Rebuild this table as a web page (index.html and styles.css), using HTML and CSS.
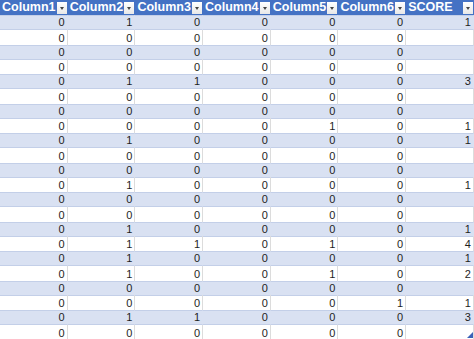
FILE: index.html
```html
<!DOCTYPE html>
<html>
<head>
<meta charset="utf-8">
<link rel="stylesheet" href="styles.css">
</head>
<body>
<div class="sheet">
  <div class="row head">
    <div class="hc"><span>Column1</span><i class="dd"></i></div>
    <div class="hc"><span>Column2</span><i class="dd"></i></div>
    <div class="hc"><span>Column3</span><i class="dd"></i></div>
    <div class="hc"><span>Column4</span><i class="dd"></i></div>
    <div class="hc"><span>Column5</span><i class="dd"></i></div>
    <div class="hc"><span>Column6</span><i class="dd"></i></div>
    <div class="hc"><span>SCORE</span><i class="dd"></i></div>
  </div>
  <div class="row band"><div class="c">0</div><div class="c">1</div><div class="c">0</div><div class="c">0</div><div class="c">0</div><div class="c">0</div><div class="c">1</div></div>
  <div class="row"><div class="c">0</div><div class="c">0</div><div class="c">0</div><div class="c">0</div><div class="c">0</div><div class="c">0</div><div class="c"></div></div>
  <div class="row band"><div class="c">0</div><div class="c">0</div><div class="c">0</div><div class="c">0</div><div class="c">0</div><div class="c">0</div><div class="c"></div></div>
  <div class="row"><div class="c">0</div><div class="c">0</div><div class="c">0</div><div class="c">0</div><div class="c">0</div><div class="c">0</div><div class="c"></div></div>
  <div class="row band"><div class="c">0</div><div class="c">1</div><div class="c">1</div><div class="c">0</div><div class="c">0</div><div class="c">0</div><div class="c">3</div></div>
  <div class="row"><div class="c">0</div><div class="c">0</div><div class="c">0</div><div class="c">0</div><div class="c">0</div><div class="c">0</div><div class="c"></div></div>
  <div class="row band"><div class="c">0</div><div class="c">0</div><div class="c">0</div><div class="c">0</div><div class="c">0</div><div class="c">0</div><div class="c"></div></div>
  <div class="row"><div class="c">0</div><div class="c">0</div><div class="c">0</div><div class="c">0</div><div class="c">1</div><div class="c">0</div><div class="c">1</div></div>
  <div class="row band"><div class="c">0</div><div class="c">1</div><div class="c">0</div><div class="c">0</div><div class="c">0</div><div class="c">0</div><div class="c">1</div></div>
  <div class="row"><div class="c">0</div><div class="c">0</div><div class="c">0</div><div class="c">0</div><div class="c">0</div><div class="c">0</div><div class="c"></div></div>
  <div class="row band"><div class="c">0</div><div class="c">0</div><div class="c">0</div><div class="c">0</div><div class="c">0</div><div class="c">0</div><div class="c"></div></div>
  <div class="row"><div class="c">0</div><div class="c">1</div><div class="c">0</div><div class="c">0</div><div class="c">0</div><div class="c">0</div><div class="c">1</div></div>
  <div class="row band"><div class="c">0</div><div class="c">0</div><div class="c">0</div><div class="c">0</div><div class="c">0</div><div class="c">0</div><div class="c"></div></div>
  <div class="row"><div class="c">0</div><div class="c">0</div><div class="c">0</div><div class="c">0</div><div class="c">0</div><div class="c">0</div><div class="c"></div></div>
  <div class="row band"><div class="c">0</div><div class="c">1</div><div class="c">0</div><div class="c">0</div><div class="c">0</div><div class="c">0</div><div class="c">1</div></div>
  <div class="row"><div class="c">0</div><div class="c">1</div><div class="c">1</div><div class="c">0</div><div class="c">1</div><div class="c">0</div><div class="c">4</div></div>
  <div class="row band"><div class="c">0</div><div class="c">1</div><div class="c">0</div><div class="c">0</div><div class="c">0</div><div class="c">0</div><div class="c">1</div></div>
  <div class="row"><div class="c">0</div><div class="c">1</div><div class="c">0</div><div class="c">0</div><div class="c">1</div><div class="c">0</div><div class="c">2</div></div>
  <div class="row band"><div class="c">0</div><div class="c">0</div><div class="c">0</div><div class="c">0</div><div class="c">0</div><div class="c">0</div><div class="c"></div></div>
  <div class="row"><div class="c">0</div><div class="c">0</div><div class="c">0</div><div class="c">0</div><div class="c">0</div><div class="c">1</div><div class="c">1</div></div>
  <div class="row band"><div class="c">0</div><div class="c">1</div><div class="c">1</div><div class="c">0</div><div class="c">0</div><div class="c">0</div><div class="c">3</div></div>
  <div class="row"><div class="c">0</div><div class="c">0</div><div class="c">0</div><div class="c">0</div><div class="c">0</div><div class="c">0</div><div class="c"></div></div>
  <svg class="handle" width="8" height="8" viewBox="0 0 8 8"><path d="M7 1 L7 7 L1 7 Z" fill="#3a62b8"/></svg>
</div>
</body>
</html>
```

FILE: styles.css
```css
html, body {
  margin: 0;
  padding: 0;
  background: #ffffff;
  overflow: hidden;
}
.sheet {
  position: relative;
  width: 474px;
  height: 339px;
  overflow: hidden;
  font-family: "Liberation Sans", Arial, sans-serif;
}
.row {
  display: grid;
  grid-template-columns: repeat(7, 67.7px);
  height: 14.75px;
  box-sizing: border-box;
}
.row.head {
  height: 15px;
  background: #4472c4;
}
.hc {
  display: flex;
  align-items: center;
  justify-content: space-between;
  padding: 0 1px 0 2px;
  color: #ffffff;
  font-weight: bold;
  font-size: 12.5px;
  line-height: 15px;
  overflow: hidden;
  white-space: nowrap;
}
.dd {
  position: relative;
  flex: 0 0 auto;
  width: 10px;
  height: 12px;
  background: linear-gradient(#ffffff, #e8e8e8);
  border: 0 solid #c8c8c8;
}
.dd::after {
  content: "";
  position: absolute;
  left: 3px;
  top: 5px;
  border-left: 2.5px solid transparent;
  border-right: 2.5px solid transparent;
  border-top: 3px solid #444444;
}
.c {
  display: flex;
  align-items: flex-end;
  justify-content: flex-end;
  padding: 0 2px 1px 0;
  font-size: 11px;
  line-height: 12px;
  color: #1e1e1e;
  box-sizing: border-box;
  border-right: 1px solid #dcdcdc;
}
.band .c {
  background: #d9e1f2;
  border-right-color: #d9e1f2;
  border-top: 1px solid #c3cfe8;
  border-bottom: 1px solid #c3cfe8;
}
.handle {
  position: absolute;
  right: 0;
  bottom: 0;
}
```
